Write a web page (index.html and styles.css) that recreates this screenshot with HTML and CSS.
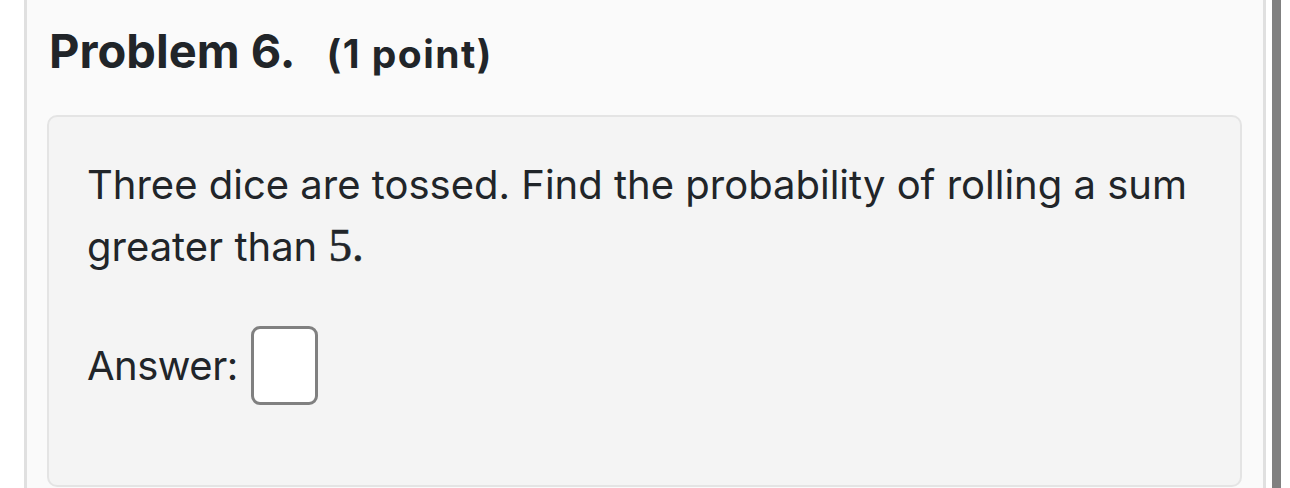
FILE: index.html
```html
<!DOCTYPE html>
<html>
<head>
<meta charset="utf-8">
<link rel="stylesheet" href="styles.css">
</head>
<body>
<div class="page">
  <div class="panel">
    <h1 class="problem-title"><span class="num">Problem 6.</span><span class="pts">(1 point)</span></h1>
    <div class="card">
      <p class="question">Three dice are tossed. Find the probability of rolling a sum greater than <span class="math">5.</span></p>
      <div class="answer-row">
        <label class="answer-label">Answer:</label>
        <span class="answer-box"></span>
      </div>
    </div>
  </div>
  <div class="scrollbar"></div>
</div>
</body>
</html>
```
FILE: styles.css
```css
html, body {
  margin: 0;
  padding: 0;
  background: #ffffff;
  height: 488px;
  overflow: hidden;
}
body {
  font-family: Inter, "Noto Sans", sans-serif;
  color: #212529;
}
.page {
  display: flex;
  align-items: stretch;
  height: 488px;
  padding-left: 24px;
}
.panel {
  width: 1242px;
  flex: none;
  box-sizing: border-box;
  background: #fafafa;
  border-left: 3px solid #e0e0e0;
  border-right: 3px solid #e0e0e0;
  padding: 0 21px 0 20px;
}
.scrollbar {
  width: 9px;
  flex: none;
  margin-left: 6px;
  background: #808080;
}
.problem-title {
  margin: 0;
  padding-top: 23px;
  display: flex;
  align-items: baseline;
  gap: 31px;
  font-weight: 700;
  line-height: 56px;
}
.num {
  font-size: 47px;
  padding-left: 2px;
}
.pts {
  font-size: 39px;
  letter-spacing: 1.5px;
}
.card {
  margin-top: 33px;
  background: #f4f4f4;
  border: 2px solid #e4e4e4;
  border-radius: 10px;
  padding: 38px 38px 80px;
}
.question {
  margin: 0;
  font-size: 40px;
  line-height: 60px;
}
.math {
  font-family: "Liberation Serif", "DejaVu Serif", serif;
  font-size: 47px;
  -webkit-text-stroke: 0.6px #212529;
}
.answer-row {
  margin-top: 49px;
  display: flex;
  align-items: center;
  gap: 13px;
}
.answer-label {
  font-size: 40px;
  letter-spacing: -0.5px;
}
.answer-box {
  width: 61px;
  height: 73px;
  border: 3px solid #808080;
  border-radius: 9px;
  background: #ffffff;
}
```
